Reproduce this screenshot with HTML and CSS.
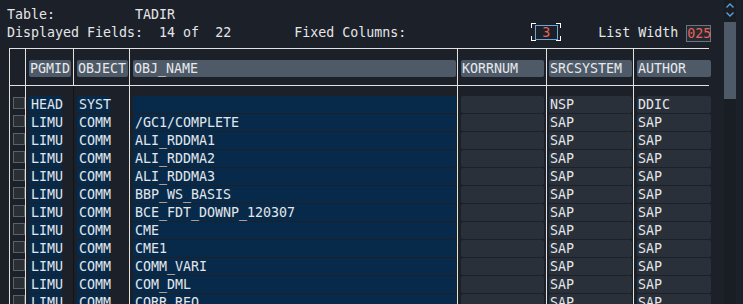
FILE: index.html
```html
<!DOCTYPE html>
<html lang="en">
<head>
  <meta charset="UTF-8" />
  <title>TADIR</title>
  <link rel="stylesheet" href="styles.css">
</head>
<body>
  <div class="page">
    <div class="main">
      <div class="info">
        <div class="line">Table:          TADIR</div>
        <div class="line line2">
          <span>Displayed Fields:  14 of  22</span>
          <span class="fixed-label">Fixed Columns:</span>
          <span class="fixbox"><span class="fixval">3</span></span>
          <span class="lw-label">List Width</span>
          <span class="lwbox">025</span>
        </div>
      </div>

      <div class="table">
        <div class="row head">
          <div class="c c0"></div>
          <div class="c c1"><div class="h">PGMID</div></div>
          <div class="c c2"><div class="h">OBJECT</div></div>
          <div class="c c3"><div class="h">OBJ_NAME</div></div>
          <div class="c c4"><div class="h">KORRNUM</div></div>
          <div class="c c5"><div class="h">SRCSYSTEM</div></div>
          <div class="c c6"><div class="h">AUTHOR</div></div>
        </div>
        <div class="row spacer">
          <div class="c c0"></div><div class="c c1"></div><div class="c c2"></div><div class="c c3"></div><div class="c c4"></div><div class="c c5"></div><div class="c c6"></div>
        </div>

        <div class="row">
          <div class="c c0"><span class="chk"></span></div>
          <div class="c c1"><div class="k short">HEAD</div></div>
          <div class="c c2"><div class="k short">SYST</div></div>
          <div class="c c3"><div class="k"></div></div>
          <div class="c c4"><div class="n"></div></div>
          <div class="c c5"><div class="n">NSP</div></div>
          <div class="c c6"><div class="n">DDIC</div></div>
        </div>
        <div class="row">
          <div class="c c0"><span class="chk"></span></div>
          <div class="c c1"><div class="k short">LIMU</div></div>
          <div class="c c2"><div class="k short">COMM</div></div>
          <div class="c c3"><div class="k">/GC1/COMPLETE</div></div>
          <div class="c c4"><div class="n"></div></div>
          <div class="c c5"><div class="n">SAP</div></div>
          <div class="c c6"><div class="n">SAP</div></div>
        </div>
        <div class="row">
          <div class="c c0"><span class="chk"></span></div>
          <div class="c c1"><div class="k short">LIMU</div></div>
          <div class="c c2"><div class="k short">COMM</div></div>
          <div class="c c3"><div class="k">ALI_RDDMA1</div></div>
          <div class="c c4"><div class="n"></div></div>
          <div class="c c5"><div class="n">SAP</div></div>
          <div class="c c6"><div class="n">SAP</div></div>
        </div>
        <div class="row">
          <div class="c c0"><span class="chk"></span></div>
          <div class="c c1"><div class="k short">LIMU</div></div>
          <div class="c c2"><div class="k short">COMM</div></div>
          <div class="c c3"><div class="k">ALI_RDDMA2</div></div>
          <div class="c c4"><div class="n"></div></div>
          <div class="c c5"><div class="n">SAP</div></div>
          <div class="c c6"><div class="n">SAP</div></div>
        </div>
        <div class="row">
          <div class="c c0"><span class="chk"></span></div>
          <div class="c c1"><div class="k short">LIMU</div></div>
          <div class="c c2"><div class="k short">COMM</div></div>
          <div class="c c3"><div class="k">ALI_RDDMA3</div></div>
          <div class="c c4"><div class="n"></div></div>
          <div class="c c5"><div class="n">SAP</div></div>
          <div class="c c6"><div class="n">SAP</div></div>
        </div>
        <div class="row">
          <div class="c c0"><span class="chk"></span></div>
          <div class="c c1"><div class="k short">LIMU</div></div>
          <div class="c c2"><div class="k short">COMM</div></div>
          <div class="c c3"><div class="k">BBP_WS_BASIS</div></div>
          <div class="c c4"><div class="n"></div></div>
          <div class="c c5"><div class="n">SAP</div></div>
          <div class="c c6"><div class="n">SAP</div></div>
        </div>
        <div class="row">
          <div class="c c0"><span class="chk"></span></div>
          <div class="c c1"><div class="k short">LIMU</div></div>
          <div class="c c2"><div class="k short">COMM</div></div>
          <div class="c c3"><div class="k">BCE_FDT_DOWNP_120307</div></div>
          <div class="c c4"><div class="n"></div></div>
          <div class="c c5"><div class="n">SAP</div></div>
          <div class="c c6"><div class="n">SAP</div></div>
        </div>
        <div class="row">
          <div class="c c0"><span class="chk"></span></div>
          <div class="c c1"><div class="k short">LIMU</div></div>
          <div class="c c2"><div class="k short">COMM</div></div>
          <div class="c c3"><div class="k">CME</div></div>
          <div class="c c4"><div class="n"></div></div>
          <div class="c c5"><div class="n">SAP</div></div>
          <div class="c c6"><div class="n">SAP</div></div>
        </div>
        <div class="row">
          <div class="c c0"><span class="chk"></span></div>
          <div class="c c1"><div class="k short">LIMU</div></div>
          <div class="c c2"><div class="k short">COMM</div></div>
          <div class="c c3"><div class="k">CME1</div></div>
          <div class="c c4"><div class="n"></div></div>
          <div class="c c5"><div class="n">SAP</div></div>
          <div class="c c6"><div class="n">SAP</div></div>
        </div>
        <div class="row">
          <div class="c c0"><span class="chk"></span></div>
          <div class="c c1"><div class="k short">LIMU</div></div>
          <div class="c c2"><div class="k short">COMM</div></div>
          <div class="c c3"><div class="k">COMM_VARI</div></div>
          <div class="c c4"><div class="n"></div></div>
          <div class="c c5"><div class="n">SAP</div></div>
          <div class="c c6"><div class="n">SAP</div></div>
        </div>
        <div class="row">
          <div class="c c0"><span class="chk"></span></div>
          <div class="c c1"><div class="k short">LIMU</div></div>
          <div class="c c2"><div class="k short">COMM</div></div>
          <div class="c c3"><div class="k">COM_DML</div></div>
          <div class="c c4"><div class="n"></div></div>
          <div class="c c5"><div class="n">SAP</div></div>
          <div class="c c6"><div class="n">SAP</div></div>
        </div>
        <div class="row">
          <div class="c c0"><span class="chk"></span></div>
          <div class="c c1"><div class="k short">LIMU</div></div>
          <div class="c c2"><div class="k short">COMM</div></div>
          <div class="c c3"><div class="k">CORR_REQ</div></div>
          <div class="c c4"><div class="n"></div></div>
          <div class="c c5"><div class="n">SAP</div></div>
          <div class="c c6"><div class="n">SAP</div></div>
        </div>
      </div>
    </div>

    <div class="scrollbar">
      <svg class="arrow" width="12" height="9" viewBox="0 0 12 9"><path d="M2.5 6.5 L6 3 L9.5 6.5" fill="none" stroke="#5d9fd8" stroke-width="1.4"/></svg>
      <svg class="arrow" width="12" height="9" viewBox="0 0 12 9"><path d="M2.5 2.5 L6 6 L9.5 2.5" fill="none" stroke="#5d9fd8" stroke-width="1.4"/></svg>
      <div class="thumb"></div>
    </div>
  </div>
</body>
</html>
```

FILE: styles.css
```css
body {
  margin: 0;
  background: #1c2028;
  color: #e4e6e9;
  font-family: "DejaVu Sans Mono", monospace;
  font-size: 13.3px;
}
.page {
  display: flex;
  width: 743px;
  height: 304px;
  overflow: hidden;
}
.main {
  width: 724px;
  overflow: hidden;
}
.info {
  padding: 6px 0 0 7px;
}
.line {
  height: 17px;
  line-height: 17px;
  white-space: pre;
}
.line2 {
  display: flex;
  align-items: center;
  height: 18px;
}
.fixed-label {
  margin-left: 63px;
}
.fixbox {
  margin-left: 125px;
  width: 30px;
  height: 18px;
  display: flex;
  align-items: center;
  justify-content: center;
  background:
    linear-gradient(#fff, #fff) left top / 5px 1px no-repeat,
    linear-gradient(#fff, #fff) left top / 1px 5px no-repeat,
    linear-gradient(#fff, #fff) right top / 5px 1px no-repeat,
    linear-gradient(#fff, #fff) right top / 1px 5px no-repeat,
    linear-gradient(#fff, #fff) left bottom / 5px 1px no-repeat,
    linear-gradient(#fff, #fff) left bottom / 1px 5px no-repeat,
    linear-gradient(#fff, #fff) right bottom / 5px 1px no-repeat,
    linear-gradient(#fff, #fff) right bottom / 1px 5px no-repeat;
}
.fixval {
  box-sizing: border-box;
  width: 23px;
  height: 15px;
  line-height: 13px;
  border: 1px solid #6aa8da;
  color: #e8615a;
  text-align: center;
}
.lw-label {
  margin-left: 37px;
}
.lwbox {
  margin-left: 8px;
  box-sizing: border-box;
  width: 25px;
  height: 17px;
  line-height: 15px;
  border: 1px solid #6b7582;
  background: #252a32;
  color: #e8615a;
  text-align: center;
  margin-top: 2px;
}

.table {
  margin: 7px 0 0 9px;
  width: 700px;
}
.row {
  display: grid;
  grid-template-columns: 16px 48px 56px 328px 89px 87px 76px;
}
.head {
  border-top: 1px solid #e2e2e2;
  border-bottom: 1px solid #e2e2e2;
}
.c {
  border-left: 1px solid #e2e2e2;
  padding: 0 1px 1px 3px;
  height: 17px;
  line-height: 17px;
  white-space: pre;
}
.head .c {
  height: 17px;
  padding-top: 11px;
  padding-bottom: 8px;
}
.spacer .c {
  height: 10px;
  padding: 0;
}
.row:not(.head) .c2 {
  border-left-color: #101318;
}
.c0 {
  padding-left: 2px;
}
.c1, .c4 {
  padding-right: 2px;
}
.c5 {
  padding-left: 2px;
}
.c6 {
  padding-right: 0;
}
.c6 > div {
  margin-right: -2px;
}
.h {
  background: #4e5a68;
  border-radius: 2px;
  height: 17px;
  padding-left: 1px;
  color: #e6e9ec;
}
.k {
  background: #072a4b;
  border-radius: 1px;
  height: 17px;
  padding-left: 2px;
}
.k.short {
  width: 31px;
}
.n {
  background: #29303a;
  border-radius: 2px;
  height: 17px;
  padding-left: 1px;
}
.chk {
  display: block;
  box-sizing: border-box;
  width: 12px;
  height: 12px;
  margin: 1px 0 0 1px;
  border: 1px solid #5c6168;
  background: #2a2e35;
}

.scrollbar {
  width: 12px;
  background: #191d24;
  display: flex;
  flex-direction: column;
}
.arrow {
  display: block;
  height: 9px;
  margin-top: 1px;
}
.arrow + .arrow {
  margin-top: 0;
}
.thumb {
  margin-top: 3px;
  height: 77px;
  background: #4e5a68;
}
```
